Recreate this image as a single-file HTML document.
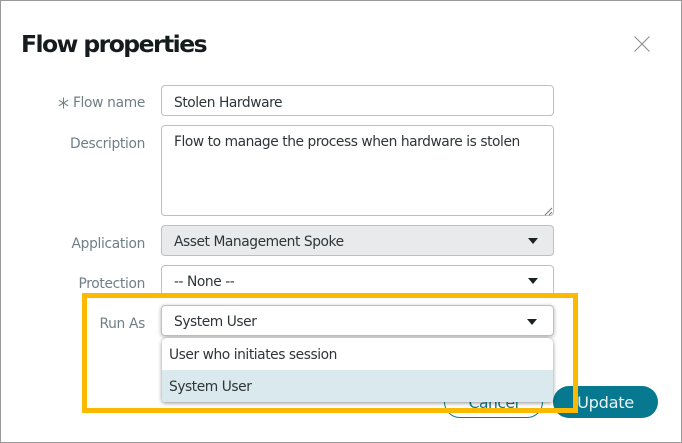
<!DOCTYPE html>
<html><head><meta charset="utf-8">
<style>
html,body{margin:0;padding:0;width:682px;height:443px;overflow:hidden;background:#fff}
body{position:relative;font-family:"DejaVu Sans","Liberation Sans",sans-serif;font-size:13.8px;letter-spacing:-.44px;color:#2e3538}
.frame{position:absolute;left:0;top:0;width:680px;height:441px;border:1px solid #9a9a9a}
.a{position:absolute;white-space:nowrap}
.lbl{position:absolute;right:537px;color:#6f7f85;white-space:nowrap;line-height:20px;letter-spacing:-.33px}
.box{position:absolute;left:161px;width:390.5px;border:1.5px solid #b8c2c4;border-radius:4px;background:#fff;box-sizing:content-box}
.txt{position:absolute;left:174px;line-height:20px;white-space:nowrap}
.arr{position:absolute;width:0;height:0;border-left:5.5px solid transparent;border-right:5.5px solid transparent;border-top:6px solid #1c2224}
</style></head><body>
<div class="frame"></div>
<div class="a" style="left:21px;top:28px;font:bold 23.5px/32px 'DejaVu Sans',sans-serif;color:#161b1d;letter-spacing:-1.55px">Flow properties</div>
<svg class="a" style="left:634px;top:36px" width="16" height="16" viewBox="0 0 16 16"><path d="M.5.5L15.5 15.5M15.5.5L.5 15.5" stroke="#8b8f90" stroke-width="1.1" fill="none"/></svg>

<svg class="a" style="left:58px;top:97px" width="11" height="12" viewBox="0 0 11 12"><path d="M5.5 .5V11.5M.8 3.2L10.2 8.8M10.2 3.2L.8 8.8" stroke="#6f7f85" stroke-width="1" fill="none"/></svg>
<div class="lbl" style="top:92.5px">Flow name</div>
<div class="box" style="top:85px;height:29px"></div>
<div class="txt" style="top:92.5px">Stolen Hardware</div>

<div class="lbl" style="top:133.5px">Description</div>
<div class="box" style="top:125px;height:89px"></div>
<div class="txt" style="top:132px">Flow to manage the process when hardware is stolen</div>
<svg class="a" style="left:544px;top:207px" width="9" height="9" viewBox="0 0 9 9"><path d="M1 8L8 1M5 8L8 5" stroke="#777" stroke-width="1" fill="none"/></svg>

<div class="lbl" style="top:233.5px">Application</div>
<div class="box" style="top:225px;height:29px;background:#e8eaeb"></div>
<div class="txt" style="top:232px">Asset Management Spoke</div>
<div class="arr" style="left:527.5px;top:238px"></div>

<div class="lbl" style="top:273.5px">Protection</div>
<div class="box" style="top:265px;height:29px"></div>
<div class="txt" style="top:272px">-- None --</div>
<div class="arr" style="left:527.5px;top:278px"></div>

<div class="a" style="left:444px;top:386px;width:97px;height:30px;border:1.5px solid #0a7a90;border-radius:17px;text-align:center;line-height:32px;font-size:15.5px;color:#0a7a90">Cancel</div>
<div class="a" style="left:553px;top:386px;width:105px;height:32px;background:#06788f;border-radius:16px;text-align:center;line-height:33px;font-size:16.2px;letter-spacing:-.3px;color:#e8f3f5">Update</div>

<div class="lbl" style="top:313.5px">Run As</div>
<div class="box" style="top:305px;height:29px;box-shadow:0 1px 4px rgba(0,0,0,.3)"></div>
<div class="txt" style="top:312px">System User</div>
<div class="arr" style="left:526.5px;top:319px"></div>

<div class="a" style="left:162px;top:338px;width:391px;height:64px;background:#fff;border-radius:5px 5px 3px 3px;box-shadow:0 1px 4px rgba(0,0,0,.45);overflow:hidden">
<div style="position:absolute;left:0;top:32px;width:100%;height:32px;background:#d9e9ed"></div>
<div style="position:absolute;left:7px;top:7px;line-height:20px">User who initiates session</div>
<div style="position:absolute;left:7px;top:39px;line-height:20px">System User</div>
</div>

<div class="a" style="left:82px;top:293px;width:486px;height:110px;border:5px solid #fdb900"></div>
</body></html>
